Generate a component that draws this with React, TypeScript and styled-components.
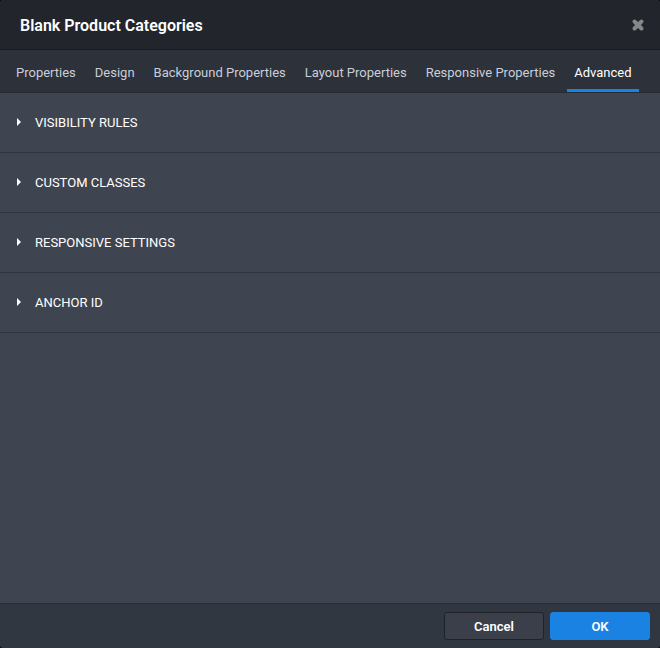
import { useState } from "react";
import styled, { createGlobalStyle } from "styled-components";

const GlobalStyle = createGlobalStyle`
  *, *::before, *::after { box-sizing: border-box; }
  html, body, #root { height: 100%; }
  body {
    margin: 0;
    background: #0b0c0f;
    font-family: Roboto, "Liberation Sans", sans-serif;
    font-size: 14px;
    color: #fff;
  }
  button { font: inherit; color: inherit; cursor: pointer; }
`;

const Dialog = styled.div`
  display: flex;
  flex-direction: column;
  min-height: 100%;
  border-radius: 4px;
  overflow: hidden;
  background: #3f4550;
`;

const Header = styled.header`
  display: flex;
  align-items: center;
  justify-content: space-between;
  height: 50px;
  padding: 0 12px 0 20px;
  background: #22252c;
  border-bottom: 1px solid #1a1c21;
`;

const Title = styled.h1`
  margin: 0;
  padding-top: 2px;
  font-size: 16px;
  line-height: 20px;
  font-weight: 600;
`;

const CloseButton = styled.button`
  display: flex;
  padding: 2px;
  border: 0;
  background: none;
  color: #868789;
`;

const TabBar = styled.nav`
  display: flex;
  gap: 5px;
  height: 43px;
  padding: 0 9px;
  background: #2d3139;
  border-bottom: 1px solid #262a31;
`;

const Tab = styled.button<{ $active: boolean }>`
  padding: 6px 7px 0;
  border: 0;
  border-bottom: 3px solid ${(p) => (p.$active ? "#1a82e2" : "transparent")};
  background: none;
  font-size: 13px;
  line-height: 20px;
  white-space: nowrap;
  color: ${(p) => (p.$active ? "#fff" : "#c9ced8")};
`;

const Body = styled.main`
  flex: 1;
`;

const Section = styled.section`
  border-bottom: 1px solid #2f343f;
`;

const SectionHeading = styled.h2`
  margin: 0;
  font-size: 13px;
  font-weight: 400;
`;

const SectionToggle = styled.button`
  display: flex;
  align-items: center;
  gap: 14px;
  width: 100%;
  height: 59px;
  padding: 0 17px;
  border: 0;
  background: none;
  line-height: 20px;
  text-transform: uppercase;
`;

const Caret = styled.svg<{ $open: boolean }>`
  transform: rotate(${(p) => (p.$open ? 90 : 0)}deg);
`;

const Footer = styled.footer`
  display: flex;
  align-items: center;
  justify-content: flex-end;
  gap: 6px;
  height: 45px;
  padding: 0 10px;
  background: #313740;
  border-top: 1px solid #282d36;
`;

const ActionButton = styled.button<{ $primary?: boolean }>`
  width: 100px;
  height: 28px;
  padding: 0;
  border: 1px solid ${(p) => (p.$primary ? "#1a82e2" : "#1f2229")};
  border-radius: 3px;
  background: ${(p) => (p.$primary ? "#1a82e2" : "#3a3f4a")};
  font-size: 13px;
  font-weight: 600;
`;

const tabs = [
  "Properties",
  "Design",
  "Background Properties",
  "Layout Properties",
  "Responsive Properties",
  "Advanced",
];

const sections = ["Visibility Rules", "Custom Classes", "Responsive Settings", "Anchor ID"];

export default function App() {
  const [activeTab, setActiveTab] = useState("Advanced");
  const [openSection, setOpenSection] = useState<string | null>(null);

  return (
    <>
      <GlobalStyle />
      <Dialog role="dialog" aria-labelledby="dialog-title">
        <Header>
          <Title id="dialog-title">Blank Product Categories</Title>
          <CloseButton type="button" aria-label="Close">
            <svg width="16" height="16" viewBox="0 0 16 16" aria-hidden="true">
              <path
                d="M4.5 4.5 11.5 11.5M11.5 4.5 4.5 11.5"
                stroke="currentColor"
                strokeWidth="4"
                strokeLinecap="round"
              />
            </svg>
          </CloseButton>
        </Header>
        <TabBar role="tablist">
          {tabs.map((tab) => (
            <Tab
              key={tab}
              type="button"
              role="tab"
              aria-selected={tab === activeTab}
              $active={tab === activeTab}
              onClick={() => setActiveTab(tab)}
            >
              {tab}
            </Tab>
          ))}
        </TabBar>
        <Body>
          {sections.map((name) => {
            const open = openSection === name;
            return (
              <Section key={name}>
                <SectionHeading>
                  <SectionToggle
                    type="button"
                    aria-expanded={open}
                    onClick={() => setOpenSection(open ? null : name)}
                  >
                    <Caret $open={open} width="4" height="9" viewBox="0 0 4 9" aria-hidden="true">
                      <path d="M0 0 4 4 0 8Z" fill="currentColor" />
                    </Caret>
                    {name}
                  </SectionToggle>
                </SectionHeading>
              </Section>
            );
          })}
        </Body>
        <Footer>
          <ActionButton type="button">Cancel</ActionButton>
          <ActionButton type="button" $primary>
            OK
          </ActionButton>
        </Footer>
      </Dialog>
    </>
  );
}
